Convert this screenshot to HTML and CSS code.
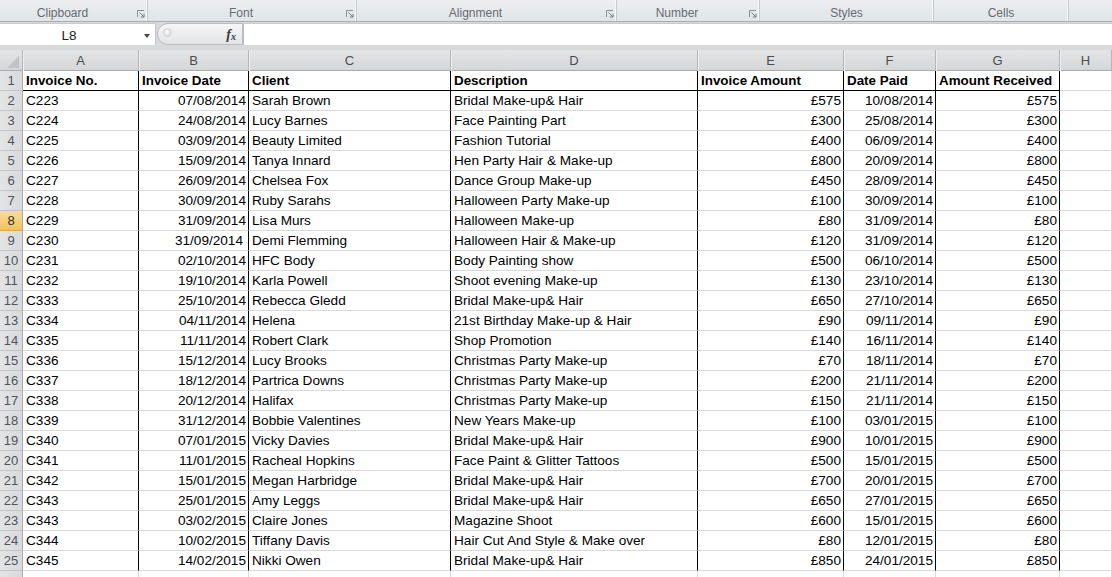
FILE: index.html
```html
<!DOCTYPE html>
<html>
<head>
<meta charset="utf-8">
<title>Invoices</title>
<link rel="stylesheet" href="styles.css">
</head>
<body>
<div class="app">
  <div class="ribbon">
    <div class="grp g-clip"><span class="lbl">Clipboard</span><span class="ln"><svg width="8" height="8" viewBox="0 0 8 8"><path d="M0.5 7V0.5H7" fill="none" stroke="#8e8e8e"/><path d="M2.5 2.5L7 7M7 3.8V7H3.8" fill="none" stroke="#7a7a7a"/></svg></span></div>
    <div class="grp g-font"><span class="lbl">Font</span><span class="ln"><svg width="8" height="8" viewBox="0 0 8 8"><path d="M0.5 7V0.5H7" fill="none" stroke="#8e8e8e"/><path d="M2.5 2.5L7 7M7 3.8V7H3.8" fill="none" stroke="#7a7a7a"/></svg></span></div>
    <div class="grp g-align"><span class="lbl">Alignment</span><span class="ln"><svg width="8" height="8" viewBox="0 0 8 8"><path d="M0.5 7V0.5H7" fill="none" stroke="#8e8e8e"/><path d="M2.5 2.5L7 7M7 3.8V7H3.8" fill="none" stroke="#7a7a7a"/></svg></span></div>
    <div class="grp g-num"><span class="lbl">Number</span><span class="ln"><svg width="8" height="8" viewBox="0 0 8 8"><path d="M0.5 7V0.5H7" fill="none" stroke="#8e8e8e"/><path d="M2.5 2.5L7 7M7 3.8V7H3.8" fill="none" stroke="#7a7a7a"/></svg></span></div>
    <div class="grp g-styles"><span class="lbl plain">Styles</span></div>
    <div class="grp g-cells"><span class="lbl plain">Cells</span></div>
    <div class="grp g-edit"></div>
  </div>

  <div class="fbar">
    <div class="namebox"><span class="nbtext">L8</span><span class="nbarrow"></span></div>
    <div class="capsule"><span class="grip"></span><span class="fx"><i>f</i><span class="fxx">x</span></span></div>
    <div class="finput"></div>
  </div>

  <div class="sheet">
    <div class="r colhdr">
      <div class="corner"><svg width="12" height="12" viewBox="0 0 12 12"><path d="M12 0V12H0Z" fill="#c3c3c3"/></svg></div>
      <div class="ch">A</div><div class="ch">B</div><div class="ch">C</div><div class="ch">D</div><div class="ch">E</div><div class="ch">F</div><div class="ch">G</div><div class="ch">H</div>
    </div>

    <div class="r hd"><div class="h">1</div><div class="c b">Invoice No.</div><div class="c b">Invoice Date</div><div class="c b">Client</div><div class="c b">Description</div><div class="c b">Invoice Amount</div><div class="c b">Date Paid</div><div class="c b">Amount Received</div><div class="c"></div></div>
    <div class="r"><div class="h">2</div><div class="c b">C223</div><div class="c b t">07/08/2014</div><div class="c b">Sarah Brown</div><div class="c b">Bridal Make-up&amp; Hair</div><div class="c b t">£575</div><div class="c b t">10/08/2014</div><div class="c b t">£575</div><div class="c"></div></div>
    <div class="r"><div class="h">3</div><div class="c b">C224</div><div class="c b t">24/08/2014</div><div class="c b">Lucy Barnes</div><div class="c b">Face Painting Part</div><div class="c b t">£300</div><div class="c b t">25/08/2014</div><div class="c b t">£300</div><div class="c"></div></div>
    <div class="r"><div class="h">4</div><div class="c b">C225</div><div class="c b t">03/09/2014</div><div class="c b">Beauty Limited</div><div class="c b">Fashion Tutorial</div><div class="c b t">£400</div><div class="c b t">06/09/2014</div><div class="c b t">£400</div><div class="c"></div></div>
    <div class="r"><div class="h">5</div><div class="c b">C226</div><div class="c b t">15/09/2014</div><div class="c b">Tanya Innard</div><div class="c b">Hen Party Hair &amp; Make-up</div><div class="c b t">£800</div><div class="c b t">20/09/2014</div><div class="c b t">£800</div><div class="c"></div></div>
    <div class="r"><div class="h">6</div><div class="c b">C227</div><div class="c b t">26/09/2014</div><div class="c b">Chelsea Fox</div><div class="c b">Dance Group Make-up</div><div class="c b t">£450</div><div class="c b t">28/09/2014</div><div class="c b t">£450</div><div class="c"></div></div>
    <div class="r"><div class="h">7</div><div class="c b">C228</div><div class="c b t">30/09/2014</div><div class="c b">Ruby Sarahs</div><div class="c b">Halloween Party Make-up</div><div class="c b t">£100</div><div class="c b t">30/09/2014</div><div class="c b t">£100</div><div class="c"></div></div>
    <div class="r"><div class="h sel">8</div><div class="c b">C229</div><div class="c b t">31/09/2014</div><div class="c b">Lisa Murs</div><div class="c b">Halloween Make-up</div><div class="c b t">£80</div><div class="c b t">31/09/2014</div><div class="c b t">£80</div><div class="c"></div></div>
    <div class="r"><div class="h">9</div><div class="c b">C230</div><div class="c b t sp">31/09/2014</div><div class="c b">Demi Flemming</div><div class="c b">Halloween Hair &amp; Make-up</div><div class="c b t">£120</div><div class="c b t">31/09/2014</div><div class="c b t">£120</div><div class="c"></div></div>
    <div class="r"><div class="h">10</div><div class="c b">C231</div><div class="c b t">02/10/2014</div><div class="c b">HFC Body</div><div class="c b">Body Painting show</div><div class="c b t">£500</div><div class="c b t">06/10/2014</div><div class="c b t">£500</div><div class="c"></div></div>
    <div class="r"><div class="h">11</div><div class="c b">C232</div><div class="c b t">19/10/2014</div><div class="c b">Karla Powell</div><div class="c b">Shoot evening Make-up</div><div class="c b t">£130</div><div class="c b t">23/10/2014</div><div class="c b t">£130</div><div class="c"></div></div>
    <div class="r"><div class="h">12</div><div class="c b">C333</div><div class="c b t">25/10/2014</div><div class="c b">Rebecca Gledd</div><div class="c b">Bridal Make-up&amp; Hair</div><div class="c b t">£650</div><div class="c b t">27/10/2014</div><div class="c b t">£650</div><div class="c"></div></div>
    <div class="r"><div class="h">13</div><div class="c b">C334</div><div class="c b t">04/11/2014</div><div class="c b">Helena</div><div class="c b">21st Birthday Make-up &amp; Hair</div><div class="c b t">£90</div><div class="c b t">09/11/2014</div><div class="c b t">£90</div><div class="c"></div></div>
    <div class="r"><div class="h">14</div><div class="c b">C335</div><div class="c b t">11/11/2014</div><div class="c b">Robert Clark</div><div class="c b">Shop Promotion</div><div class="c b t">£140</div><div class="c b t">16/11/2014</div><div class="c b t">£140</div><div class="c"></div></div>
    <div class="r"><div class="h">15</div><div class="c b">C336</div><div class="c b t">15/12/2014</div><div class="c b">Lucy Brooks</div><div class="c b">Christmas Party Make-up</div><div class="c b t">£70</div><div class="c b t">18/11/2014</div><div class="c b t">£70</div><div class="c"></div></div>
    <div class="r"><div class="h">16</div><div class="c b">C337</div><div class="c b t">18/12/2014</div><div class="c b">Partrica Downs</div><div class="c b">Christmas Party Make-up</div><div class="c b t">£200</div><div class="c b t">21/11/2014</div><div class="c b t">£200</div><div class="c"></div></div>
    <div class="r"><div class="h">17</div><div class="c b">C338</div><div class="c b t">20/12/2014</div><div class="c b">Halifax</div><div class="c b">Christmas Party Make-up</div><div class="c b t">£150</div><div class="c b t">21/11/2014</div><div class="c b t">£150</div><div class="c"></div></div>
    <div class="r"><div class="h">18</div><div class="c b">C339</div><div class="c b t">31/12/2014</div><div class="c b">Bobbie Valentines</div><div class="c b">New Years Make-up</div><div class="c b t">£100</div><div class="c b t">03/01/2015</div><div class="c b t">£100</div><div class="c"></div></div>
    <div class="r"><div class="h">19</div><div class="c b">C340</div><div class="c b t">07/01/2015</div><div class="c b">Vicky Davies</div><div class="c b">Bridal Make-up&amp; Hair</div><div class="c b t">£900</div><div class="c b t">10/01/2015</div><div class="c b t">£900</div><div class="c"></div></div>
    <div class="r"><div class="h">20</div><div class="c b">C341</div><div class="c b t">11/01/2015</div><div class="c b">Racheal Hopkins</div><div class="c b">Face Paint &amp; Glitter Tattoos</div><div class="c b t">£500</div><div class="c b t">15/01/2015</div><div class="c b t">£500</div><div class="c"></div></div>
    <div class="r"><div class="h">21</div><div class="c b">C342</div><div class="c b t">15/01/2015</div><div class="c b">Megan Harbridge</div><div class="c b">Bridal Make-up&amp; Hair</div><div class="c b t">£700</div><div class="c b t">20/01/2015</div><div class="c b t">£700</div><div class="c"></div></div>
    <div class="r"><div class="h">22</div><div class="c b">C343</div><div class="c b t">25/01/2015</div><div class="c b">Amy Leggs</div><div class="c b">Bridal Make-up&amp; Hair</div><div class="c b t">£650</div><div class="c b t">27/01/2015</div><div class="c b t">£650</div><div class="c"></div></div>
    <div class="r"><div class="h">23</div><div class="c b">C343</div><div class="c b t">03/02/2015</div><div class="c b">Claire Jones</div><div class="c b">Magazine Shoot</div><div class="c b t">£600</div><div class="c b t">15/01/2015</div><div class="c b t">£600</div><div class="c"></div></div>
    <div class="r"><div class="h">24</div><div class="c b">C344</div><div class="c b t">10/02/2015</div><div class="c b">Tiffany Davis</div><div class="c b">Hair Cut And Style &amp; Make over</div><div class="c b t">£80</div><div class="c b t">12/01/2015</div><div class="c b t">£80</div><div class="c"></div></div>
    <div class="r"><div class="h">25</div><div class="c b">C345</div><div class="c b t">14/02/2015</div><div class="c b">Nikki Owen</div><div class="c b">Bridal Make-up&amp; Hair</div><div class="c b t">£850</div><div class="c b t">24/01/2015</div><div class="c b t">£850</div><div class="c"></div></div>
    <div class="r"><div class="h"></div><div class="c"></div><div class="c"></div><div class="c"></div><div class="c"></div><div class="c"></div><div class="c"></div><div class="c"></div><div class="c"></div></div>
  </div>
</div>
</body>
</html>
```

FILE: styles.css
```css
* { box-sizing: border-box; }

html, body {
  margin: 0;
  padding: 0;
  height: 577px;
  overflow: hidden;
  background: #ffffff;
}

.app {
  width: 1112px;
  height: 577px;
  overflow: hidden;
  font-family: "Liberation Sans", Arial, sans-serif;
}

/* ---------- ribbon group labels ---------- */
.ribbon {
  display: flex;
  height: 22px;
  background: linear-gradient(#eceef1, #e1e4e8);
  border-bottom: 1px solid #a9acb1;
}

.grp {
  display: flex;
  align-items: center;
  height: 21px;
  border-right: 1px solid #c6c9cd;
  box-shadow: inset -1px 0 0 #f6f7f8;
}

.g-clip { width: 148px; }
.g-font { width: 209px; }
.g-align { width: 260px; }
.g-num { width: 143px; }
.g-styles { width: 174px; }
.g-cells { width: 135px; }
.g-edit { flex: 1; border-right: none; box-shadow: none; }

.lbl {
  flex: 1;
  text-align: center;
  font-size: 12px;
  color: #666b72;
  margin-right: 12px;
  padding-top: 5px;
}

.lbl.plain { margin-right: 0; }

.ln {
  display: flex;
  width: 8px;
  height: 8px;
  margin-right: 2px;
  margin-top: 6px;
}

/* ---------- formula bar ---------- */
.fbar {
  display: flex;
  height: 28px;
  padding: 1px 0 5px 0;
  background: #d8d9db;
}

.namebox {
  display: flex;
  align-items: center;
  width: 156px;
  padding-top: 2px;
  background: #ffffff;
  border-top: 1px solid #c9cbce;
  border-right: 1px solid #c2c4c7;
}

.nbtext {
  width: 138px;
  text-align: center;
  font-size: 13.5px;
  color: #222;
}

.nbarrow {
  width: 0;
  height: 0;
  margin-left: 6px;
  border-left: 3.5px solid transparent;
  border-right: 3.5px solid transparent;
  border-top: 4px solid #444;
}

.capsule {
  display: flex;
  align-items: center;
  justify-content: space-between;
  width: 86px;
  margin-left: 1px;
  padding: 0 6px 0 5px;
  background: linear-gradient(#f6f6f7, #e3e4e6);
  border: 1px solid #b9bcc0;
  border-radius: 11px 0 0 11px;
}

.grip {
  width: 9px;
  height: 9px;
  margin-top: -4px;
  border-radius: 50%;
  background: radial-gradient(circle at 40% 40%, #ffffff, #c9cbce);
  border: 1px solid #d0d2d5;
}

.fx {
  font-family: "Liberation Serif", "Times New Roman", serif;
  font-weight: bold;
  font-size: 14px;
  color: #3a3a3a;
  padding-top: 1px;
}

.fx i { font-style: italic; }

.fxx {
  font-style: italic;
  font-size: 10px;
  vertical-align: -1px;
}

.finput {
  flex: 1;
  background: #ffffff;
  border-top: 1px solid #c9cbce;
  border-left: 1px solid #b9bcc0;
}

/* ---------- sheet ---------- */
.r {
  display: grid;
  grid-template-columns: 23px 116px 110px 202px 247px 146px 92px 124px 1fr;
  height: 20px;
}

.colhdr {
  height: 21px;
  background: linear-gradient(#e4e5e7, #d5d6d8);
  border-bottom: 1px solid #a9abae;
}

.corner {
  display: flex;
  align-items: flex-end;
  justify-content: flex-end;
  padding: 0 3px 3px 0;
  border-right: 1px solid #b4b6b9;
}

.ch {
  text-align: center;
  font-size: 13px;
  line-height: 20px;
  padding-top: 1px;
  color: #4a4c50;
  border-right: 1px solid #b4b6b9;
  box-shadow: inset 1px 0 0 #eeeff0;
}

.h {
  text-align: center;
  font-size: 13px;
  line-height: 18px;
  padding-top: 1px;
  color: #50535a;
  background: linear-gradient(90deg, #e3e4e6, #d8d9db);
  border-right: 1px solid #a9abae;
  border-bottom: 1px solid #c2c4c7;
}

.h.sel {
  background: linear-gradient(#f9dd9c, #f1c15c);
  color: #333;
  border-bottom-color: #d9a94a;
}

.c {
  font-size: 13.6px;
  line-height: 18px;
  padding: 1px 3px 0 3px;
  color: #000;
  white-space: nowrap;
  overflow: hidden;
  border-right: 1px solid #d9d9d9;
  border-bottom: 1px solid #d9d9d9;
}

.c.b { border-right-color: #000; }

.c.t {
  text-align: right;
  padding-right: 2px;
}

.c.sp { padding-right: 5px; }

.hd .c {
  font-weight: bold;
  font-size: 13.4px;
  border-bottom-color: #000;
}

.hd .c:last-child { border-bottom-color: #d9d9d9; }
```
